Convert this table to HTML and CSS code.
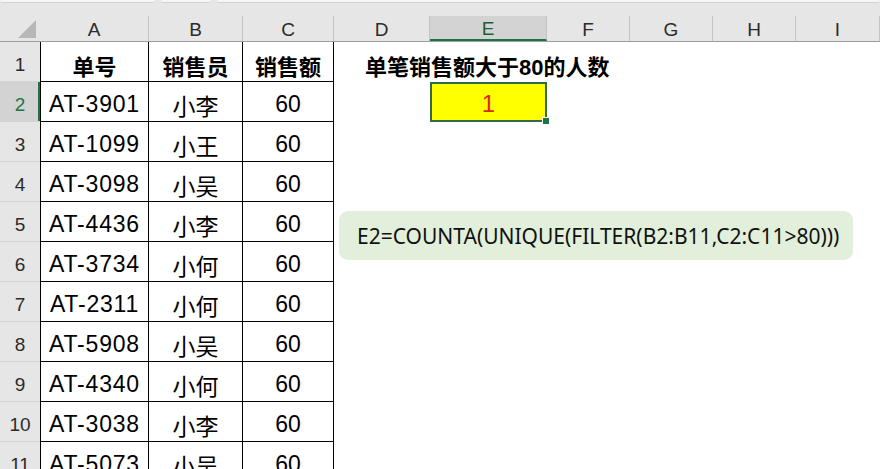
FILE: index.html
```html
<!DOCTYPE html>
<html lang="zh-CN">
<head>
    <meta charset="UTF-8">
    <meta name="viewport" content="width=device-width, initial-scale=1.0">
    <title>单笔销售额大于80的人数</title>
    <link rel="stylesheet" href="styles.css">
</head>
<body>
    <div class="sheet">
        <div class="topbar">
            <div class="edge edge-a"></div>
            <div class="edge edge-b"></div>
            <div class="edge edge-c"></div>
        </div>

        <div class="colheads">
            <div class="corner"><span class="corner-tri"></span></div>
            <div class="colhead w-a">A</div>
            <div class="colhead w-b">B</div>
            <div class="colhead w-c">C</div>
            <div class="colhead w-d">D</div>
            <div class="colhead w-e active">E</div>
            <div class="colhead w-f">F</div>
            <div class="colhead w-g">G</div>
            <div class="colhead w-h">H</div>
            <div class="colhead w-i">I</div>
        </div>

        <div class="body">
            <div class="rownums">
                <div class="rownum">1</div>
                <div class="rownum active">2</div>
                <div class="rownum">3</div>
                <div class="rownum">4</div>
                <div class="rownum">5</div>
                <div class="rownum">6</div>
                <div class="rownum">7</div>
                <div class="rownum">8</div>
                <div class="rownum">9</div>
                <div class="rownum">10</div>
                <div class="rownum">11</div>
            </div>

            <div class="table">
                <div class="cell first head">单号</div>
                <div class="cell head">销售员</div>
                <div class="cell head">销售额</div>

                <div class="cell first">AT-3901</div>
                <div class="cell">小李</div>
                <div class="cell">60</div>

                <div class="cell first">AT-1099</div>
                <div class="cell">小王</div>
                <div class="cell">60</div>

                <div class="cell first">AT-3098</div>
                <div class="cell">小吴</div>
                <div class="cell">60</div>

                <div class="cell first">AT-4436</div>
                <div class="cell">小李</div>
                <div class="cell">60</div>

                <div class="cell first">AT-3734</div>
                <div class="cell">小何</div>
                <div class="cell">60</div>

                <div class="cell first">AT-2311</div>
                <div class="cell">小何</div>
                <div class="cell">60</div>

                <div class="cell first">AT-5908</div>
                <div class="cell">小吴</div>
                <div class="cell">60</div>

                <div class="cell first">AT-4340</div>
                <div class="cell">小何</div>
                <div class="cell">60</div>

                <div class="cell first">AT-3038</div>
                <div class="cell">小李</div>
                <div class="cell">60</div>

                <div class="cell first">AT-5073</div>
                <div class="cell">小吴</div>
                <div class="cell">60</div>
            </div>

            <div class="free">
                <div class="title">单笔销售额大于80的人数</div>
                <div class="result">
                    1
                    <span class="handle"></span>
                </div>
                <div class="formula">E2=COUNTA(UNIQUE(FILTER(B2:B11,C2:C11&gt;80)))</div>
            </div>
        </div>
    </div>
</body>
</html>
```

FILE: styles.css
```css
body {
    margin: 0;
    background: #ffffff;
    font-family: 'Liberation Sans', 'Noto Sans CJK SC', sans-serif;
}

.sheet {
    width: 880px;
    height: 469px;
    overflow: hidden;
}

/* bottom edge of the formula bar */
.topbar {
    height: 16px;
    background: #e6e6e6;
    display: flex;
    gap: 6px;
}

.edge {
    height: 2px;
    background: #f6f6f6;
    border-bottom: 1px solid #d2d2d2;
    border-radius: 0 0 3px 3px;
}

.edge-a { width: 155px; }
.edge-b { width: 50px; }
.edge-c { flex: 1; }

/* column letters */
.colheads {
    display: flex;
    height: 26px;
    background: #e6e6e6;
    border-bottom: 1px solid #9e9e9e;
    box-sizing: border-box;
}

.corner {
    width: 40px;
    position: relative;
}

.corner-tri {
    position: absolute;
    right: 4px;
    bottom: 3px;
    width: 0;
    height: 0;
    border-left: 18px solid transparent;
    border-bottom: 18px solid #b7b7b7;
}

.colhead {
    box-sizing: border-box;
    border-right: 1px solid #c3c3c3;
    display: flex;
    justify-content: center;
    align-items: center;
    padding-top: 3px;
    font-size: 19px;
    color: #2b2b2b;
}

.colhead.active {
    background: #d3d3d3;
    border-bottom: 2px solid #217346;
    color: #215c3a;
}

.w-a { width: 109px; }
.w-b { width: 94px; }
.w-c { width: 91px; }
.w-d { width: 96px; }
.w-e { width: 117px; }
.w-f { width: 83px; }
.w-g { width: 83px; }
.w-h { width: 83px; }
.w-i { width: 84px; }

.body {
    display: flex;
}

/* row numbers */
.rownums {
    width: 40px;
    background: #e6e6e6;
}

.rownum {
    height: 40px;
    box-sizing: border-box;
    border-bottom: 1px solid #d3d3d3;
    display: flex;
    justify-content: center;
    align-items: center;
    padding-top: 6px;
    font-size: 19px;
    color: #2b2b2b;
}

.rownum.active {
    background: #d3d3d3;
    color: #217346;
    box-shadow: inset -2px 0 0 #217346;
}

/* data range A1:C11 */
.table {
    display: grid;
    grid-template-columns: 109px 94px 91px;
    grid-auto-rows: 40px;
}

.cell {
    box-sizing: border-box;
    border-right: 1px solid #000000;
    border-bottom: 1px solid #000000;
    display: flex;
    justify-content: center;
    align-items: center;
    padding-top: 6px;
    font-size: 23px;
    color: #000000;
}

.cell.first {
    border-left: 1px solid #000000;
    letter-spacing: 0.8px;
}

.cell.head {
    font-weight: bold;
    font-size: 22px;
    letter-spacing: 0;
}

/* area right of the table */
.free {
    flex: 1;
}

.title {
    height: 40px;
    display: flex;
    align-items: center;
    padding-top: 6px;
    padding-left: 31px;
    box-sizing: border-box;
    font-size: 22px;
    font-weight: bold;
    color: #000000;
}

.result {
    position: relative;
    margin-left: 96px;
    width: 117px;
    height: 40px;
    box-sizing: border-box;
    background: #ffff00;
    border: 2px solid #2f6b46;
    display: flex;
    justify-content: center;
    align-items: center;
    padding-top: 4px;
    font-size: 24px;
    color: #e0251b;
}

.handle {
    position: absolute;
    right: -5px;
    bottom: -5px;
    width: 6px;
    height: 6px;
    background: #217346;
    border: 1px solid #ffffff;
}

.formula {
    margin-top: 89px;
    margin-left: 5px;
    width: 514px;
    height: 49px;
    box-sizing: border-box;
    background: #e2efda;
    border-radius: 9px;
    display: flex;
    align-items: center;
    padding-left: 18px;
    font-family: 'Noto Sans', 'Noto Sans CJK SC', sans-serif;
    font-size: 21px;
    color: #111111;
}
```
